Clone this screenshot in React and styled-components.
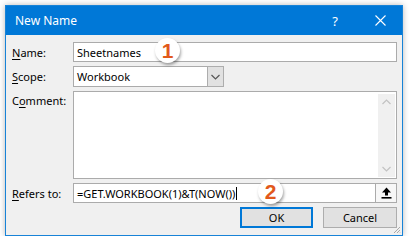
import styled, { createGlobalStyle } from 'styled-components'

const Global = createGlobalStyle`
  html, body {
    margin: 0;
    padding: 0;
    background: #ffffff;
  }
  body {
    font-family: "Noto Sans", "Open Sans", sans-serif;
    font-size: 11px;
    color: #000;
  }
`

const Page = styled.div`
  padding: 5px 0 0 5px;
`

const Window = styled.div`
  width: 398px;
  height: 231px;
  box-sizing: border-box;
  border: 1px solid #1883d7;
  background: #f0f0f0;
  box-shadow: 0 0 6px rgba(0, 0, 0, 0.28);
  display: flex;
  flex-direction: column;
  position: relative;
`

const TitleBar = styled.div`
  height: 29px;
  background: #0078d7;
  color: #fff;
  display: flex;
  align-items: center;
  padding-left: 9px;
  font-size: 12px;
`

const TitleText = styled.div`
  flex: 1;
`

const TitleButton = styled.div`
  width: ${p => p.$w}px;
  margin-right: ${p => p.$mr || 0}px;
  display: flex;
  justify-content: center;
  align-items: center;
  font-size: 13px;
`

const Body = styled.div`
  flex: 1;
  display: grid;
  grid-template-columns: 61px 1fr;
  grid-template-rows: 20px 21px 88px 20px 21px;
  row-gap: 4px;
  padding: 7px 5px 0 6px;
`

const Label = styled.div`
  display: flex;
  align-items: ${p => (p.$top ? 'flex-start' : 'center')};
  padding-top: ${p => (p.$top ? '2px' : '0')};
  white-space: nowrap;
`

const Key = styled.span`
  text-decoration: underline;
  text-underline-offset: 2px;
`

const Field = styled.div`
  box-sizing: border-box;
  background: #fff;
  border: 1px solid #ababab;
  display: flex;
  align-items: center;
  position: relative;
`

const FieldText = styled.div`
  flex: 1;
  padding-left: 3px;
  white-space: nowrap;
`

const Caret = styled.span`
  display: inline-block;
  width: 1px;
  height: 13px;
  background: #000;
  vertical-align: -2px;
  margin-left: 1px;
`

const Select = styled(Field)`
  width: 151px;
`

const DropButton = styled.div`
  width: 17px;
  height: 21px;
  margin: -1px -1px -1px 0;
  box-sizing: border-box;
  background: #e1e1e1;
  border: 1px solid #adadad;
  display: flex;
  justify-content: center;
  align-items: center;
`

const Area = styled(Field)`
  align-items: stretch;
  justify-content: flex-end;
  padding: 2px 1px 1px 0;
`

const ScrollBar = styled.div`
  width: 17px;
  background: #f0f0f0;
  display: flex;
  flex-direction: column;
  justify-content: space-between;
  align-items: center;
  padding: 5px 0;
`

const PickButton = styled.div`
  width: 21px;
  height: 18px;
  box-sizing: border-box;
  border-left: 1px solid #ababab;
  background: #f7f7f7;
  display: flex;
  justify-content: center;
  align-items: center;
`

const Buttons = styled.div`
  grid-column: 2;
  display: flex;
  justify-content: flex-end;
  gap: 10px;
`

const Button = styled.div`
  width: ${p => p.$w}px;
  box-sizing: border-box;
  background: #e1e1e1;
  border: ${p => (p.$primary ? '2px solid #0078d7' : '1px solid #adadad')};
  display: flex;
  justify-content: center;
  align-items: center;
`

const Badge = styled.div`
  position: absolute;
  left: ${p => p.$x}px;
  top: ${p => p.$y}px;
  width: 25px;
  height: 25px;
  border-radius: 50%;
  background: #fff;
  box-shadow: 1px 2px 3px rgba(0, 0, 0, 0.35);
  color: #e2591c;
  font-family: "Liberation Sans", Arial, sans-serif;
  font-weight: bold;
  font-size: 21px;
  display: flex;
  justify-content: center;
  align-items: center;
  line-height: 1;
`

const Grip = styled.svg`
  position: absolute;
  right: 1px;
  bottom: 1px;
`

const Chevron = ({ up, color = '#c2c2c2' }) => (
  <svg width="9" height="6" viewBox="0 0 9 6">
    <path
      d={up ? 'M0.5 5 L4.5 1 L8.5 5' : 'M0.5 1 L4.5 5 L8.5 1'}
      fill="none"
      stroke={color}
      strokeWidth="1.2"
    />
  </svg>
)

const App = () => {
  return (
    <Page>
      <Global />
      <Window>
        <TitleBar>
          <TitleText>New Name</TitleText>
          <TitleButton $w={20} $mr={13}>?</TitleButton>
          <TitleButton $w={44}>
            <svg width="11" height="11" viewBox="0 0 11 11">
              <path d="M0.5 0.5 L10.5 10.5 M10.5 0.5 L0.5 10.5" stroke="#fff" strokeWidth="1.1" />
            </svg>
          </TitleButton>
        </TitleBar>
        <Body>
          <Label><Key>N</Key>ame:</Label>
          <Field><FieldText>Sheetnames</FieldText></Field>

          <Label><Key>S</Key>cope:</Label>
          <Select>
            <FieldText>Workbook</FieldText>
            <DropButton><Chevron color="#555" /></DropButton>
          </Select>

          <Label $top>C<Key>o</Key>mment:</Label>
          <Area>
            <ScrollBar>
              <Chevron up />
              <Chevron />
            </ScrollBar>
          </Area>

          <Label><Key>R</Key>efers to:</Label>
          <Field>
            <FieldText>=GET.WORKBOOK(1)&amp;T(NOW())<Caret /></FieldText>
            <PickButton>
              <svg width="11" height="12" viewBox="0 0 11 12">
                <path d="M5.5 0.5 L10 5.5 L7 5.5 L7 8.5 L4 8.5 L4 5.5 L1 5.5 Z" fill="#000" />
                <rect x="0.5" y="10" width="10" height="1.6" fill="#000" />
              </svg>
            </PickButton>
          </Field>

          <Buttons>
            <Button $w={73} $primary>OK</Button>
            <Button $w={74}>Cancel</Button>
          </Buttons>
        </Body>
        <Badge $x={149} $y={32}>1</Badge>
        <Badge $x={252} $y={173}>2</Badge>
        <Grip width="8" height="8" viewBox="0 0 8 8">
          <path d="M7 1 L1 7 M7 4 L4 7 M7 6.5 L6.5 7" stroke="#a8a8a8" strokeWidth="1" />
        </Grip>
      </Window>
    </Page>
  )
}

export default App
